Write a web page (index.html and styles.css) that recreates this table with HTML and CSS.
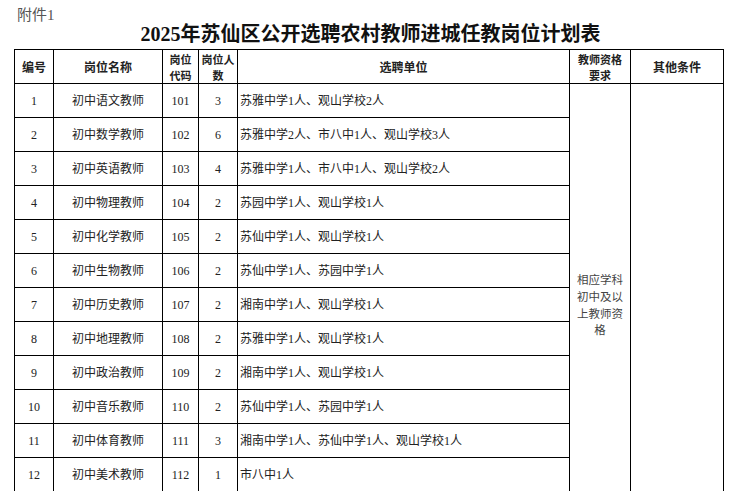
FILE: index.html
```html
<!DOCTYPE html>
<html lang="zh-CN">
<head>
<meta charset="utf-8">
<title>2025年苏仙区公开选聘农村教师进城任教岗位计划表</title>
<link rel="stylesheet" href="styles.css">
</head>
<body>
<div class="page">
  <div class="note">附件1</div>
  <h1 class="title">2025年苏仙区公开选聘农村教师进城任教岗位计划表</h1>
  <div class="sheet">
    <table class="plan">
      <colgroup>
        <col class="c-no"><col class="c-name"><col class="c-code"><col class="c-num"><col class="c-unit"><col class="c-req"><col class="c-other">
      </colgroup>
      <thead>
        <tr>
          <th>编号</th>
          <th>岗位名称</th>
          <th class="two">岗位<br>代码</th>
          <th class="two">岗位人<br>数</th>
          <th>选聘单位</th>
          <th class="two">教师资格<br>要求</th>
          <th>其他条件</th>
        </tr>
      </thead>
      <tbody>
        <tr><td>1</td><td>初中语文教师</td><td>101</td><td>3</td><td class="unit">苏雅中学1人、观山学校2人</td><td class="req" rowspan="13">相应学科<br>初中及以<br>上教师资<br>格</td><td rowspan="13"></td></tr>
        <tr><td>2</td><td>初中数学教师</td><td>102</td><td>6</td><td class="unit">苏雅中学2人、市八中1人、观山学校3人</td></tr>
        <tr><td>3</td><td>初中英语教师</td><td>103</td><td>4</td><td class="unit">苏雅中学1人、市八中1人、观山学校2人</td></tr>
        <tr><td>4</td><td>初中物理教师</td><td>104</td><td>2</td><td class="unit">苏园中学1人、观山学校1人</td></tr>
        <tr><td>5</td><td>初中化学教师</td><td>105</td><td>2</td><td class="unit">苏仙中学1人、观山学校1人</td></tr>
        <tr><td>6</td><td>初中生物教师</td><td>106</td><td>2</td><td class="unit">苏仙中学1人、苏园中学1人</td></tr>
        <tr><td>7</td><td>初中历史教师</td><td>107</td><td>2</td><td class="unit">湘南中学1人、观山学校1人</td></tr>
        <tr><td>8</td><td>初中地理教师</td><td>108</td><td>2</td><td class="unit">苏雅中学1人、观山学校1人</td></tr>
        <tr><td>9</td><td>初中政治教师</td><td>109</td><td>2</td><td class="unit">湘南中学1人、观山学校1人</td></tr>
        <tr><td>10</td><td>初中音乐教师</td><td>110</td><td>2</td><td class="unit">苏仙中学1人、苏园中学1人</td></tr>
        <tr><td>11</td><td>初中体育教师</td><td>111</td><td>3</td><td class="unit">湘南中学1人、苏仙中学1人、观山学校1人</td></tr>
        <tr><td>12</td><td>初中美术教师</td><td>112</td><td>1</td><td class="unit">市八中1人</td></tr>
        <tr><td>&nbsp;</td><td></td><td></td><td></td><td class="unit"></td></tr>
      </tbody>
    </table>
  </div>
</div>
</body>
</html>
```
FILE: styles.css
```css
html, body {
  margin: 0;
  padding: 0;
  background: #fff;
}
body {
  font-family: "Liberation Serif", "Noto Sans CJK SC", serif;
  color: #222;
}
.page {
  width: 741px;
  height: 502px;
  overflow: hidden;
}
.note {
  padding: 5px 0 0 17px;
  font-size: 15px;
  line-height: 20px;
  color: #555;
}
.title {
  margin: -2px 0 0 0;
  text-align: center;
  font-size: 20px;
  line-height: 22px;
  font-weight: 700;
  color: #111;
  letter-spacing: 0;
}
.sheet {
  margin: 4px 0 0 14px;
  height: 442px;
  overflow: hidden;
}
.plan {
  table-layout: fixed;
  width: 709px;
  border-collapse: collapse;
  font-size: 12px;
}
.c-no { width: 39px; }
.c-name { width: 109px; }
.c-code { width: 36px; }
.c-num { width: 39px; }
.c-unit { width: 332px; }
.c-req { width: 61px; }
.c-other { width: 93px; }
.plan th, .plan td {
  border: 1px solid #000;
  padding: 0;
  text-align: center;
  vertical-align: middle;
}
.plan th {
  height: 33px;
  font-family: "Noto Sans CJK SC", sans-serif;
  font-weight: 700;
  line-height: 16px;
  color: #222;
}
.plan th.two {
  font-size: 11px;
  line-height: 16px;
}
.plan td {
  height: 33px;
  line-height: 16px;
  color: #222;
}
.plan td.unit {
  text-align: left;
  padding-left: 2px;
}
.plan td.req {
  font-family: "Noto Sans CJK SC", sans-serif;
  font-size: 11.5px;
  line-height: 16.7px;
  color: #444;
}
```
